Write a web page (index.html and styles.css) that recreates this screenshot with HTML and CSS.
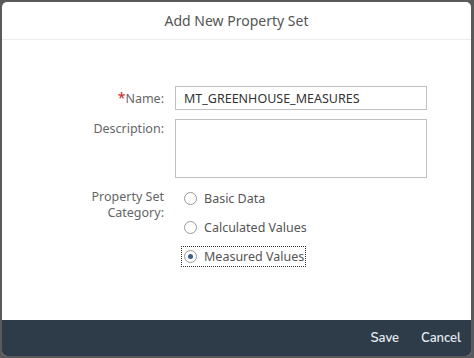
FILE: index.html
```html
<!DOCTYPE html>
<html lang="en">
<head>
  <meta charset="UTF-8" />
  <title>Add New Property Set</title>
  <link rel="stylesheet" href="styles.css">
</head>
<body>
  <div class="dialog">
    <div class="dialog-header">Add New Property Set</div>

    <div class="dialog-content">
      <div class="form">
        <label class="form-label label-center"><span class="required">*</span>Name:</label>
        <input class="text-input" type="text" value="MT_GREENHOUSE_MEASURES">

        <label class="form-label label-top">Description:</label>
        <textarea class="text-area"></textarea>

        <label class="form-label label-category">Property Set<br>Category:</label>
        <div class="radio-group">
          <div class="radio-row"><span class="radio"></span>Basic Data</div>
          <div class="radio-row"><span class="radio"></span>Calculated Values</div>
          <div class="radio-row focused"><span class="radio checked"></span>Measured Values</div>
        </div>
      </div>
    </div>

    <div class="dialog-footer">
      <button class="footer-button">Save</button>
      <button class="footer-button">Cancel</button>
    </div>
  </div>
</body>
</html>
```

FILE: styles.css
```css
* {
  margin: 0;
  padding: 0;
  box-sizing: border-box;
}

body {
  font-family: 'Noto Sans', 'Open Sans', sans-serif;
  background: #5a5a5a;
  padding: 2px 0 0 2px;
  width: 474px;
  height: 358px;
  overflow: hidden;
}

.dialog {
  width: 469px;
  height: 354px;
  background: #fff;
  border-radius: 5px;
  overflow: hidden;
  display: flex;
  flex-direction: column;
}

.dialog-header {
  height: 38px;
  border-bottom: 1px solid #ececec;
  display: flex;
  align-items: center;
  justify-content: center;
  font-size: 14px;
  color: #555;
}

.dialog-content {
  flex: 1;
  padding-top: 46px;
}

.form {
  display: grid;
  grid-template-columns: 162px 252px;
  column-gap: 11px;
  row-gap: 9px;
}

.form-label {
  text-align: right;
  font-size: 12.5px;
  color: #666;
  line-height: 15px;
}

.label-center {
  align-self: center;
}

.label-top {
  padding-top: 2px;
}

.label-category {
  line-height: 16px;
  padding-top: 2px;
}

.required {
  color: #cc1919;
  font-size: 14px;
}

.text-input {
  height: 24px;
  border: 1px solid #bfbfbf;
  padding: 0 8px;
  font: 12.5px 'Noto Sans', 'Open Sans', sans-serif;
  color: #333;
  outline: none;
}

.text-area {
  height: 59px;
  border: 1px solid #bfbfbf;
  resize: none;
  outline: none;
}

.radio-group {
  display: flex;
  flex-direction: column;
  margin-top: -3px;
}

.radio-row {
  display: flex;
  align-items: center;
  height: 29px;
  padding-left: 9px;
  font-size: 12.5px;
  color: #555;
}

.radio-row.focused {
  align-self: flex-start;
  height: 21px;
  margin-top: 4px;
  margin-left: 6px;
  padding-left: 2px;
  padding-right: 1px;
  border: 1px dotted #333;
}

.radio {
  width: 13px;
  height: 13px;
  border: 1px solid #999;
  border-radius: 50%;
  margin-right: 7px;
  display: flex;
  align-items: center;
  justify-content: center;
}

.radio.checked::after {
  content: '';
  width: 5px;
  height: 5px;
  border-radius: 50%;
  background: #3b5d8a;
}

.dialog-footer {
  height: 36px;
  background: #2e3b48;
  display: flex;
  align-items: center;
  justify-content: flex-end;
  gap: 22px;
  padding-right: 10px;
}

.footer-button {
  background: none;
  border: none;
  color: #e4ebf2;
  font: 600 13px 'Nunito', 'Lato', sans-serif;
  cursor: pointer;
}
```
